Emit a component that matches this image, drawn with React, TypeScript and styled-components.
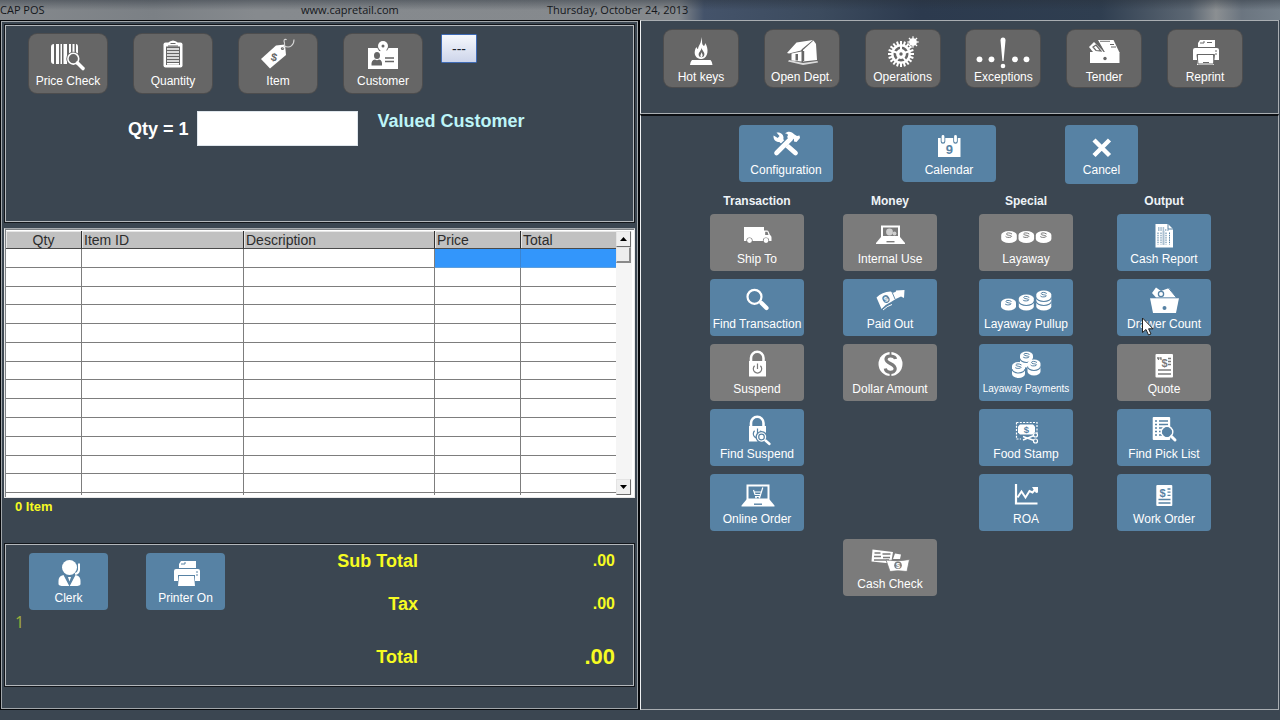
import React from 'react';
import styled, { createGlobalStyle, css } from 'styled-components';

const SLATE = '#3b4651';
const CHARCOAL = '#666666';
const GREY = '#7b7b7b';
const BLUE = '#5782a4';
const YELLOW = '#f6fb22';

const GlobalStyle = createGlobalStyle`
  *, *::before, *::after { box-sizing: border-box; }
  body {
    margin: 0;
    background: ${SLATE};
    font-family: "Liberation Sans", Arial, sans-serif;
    color: #fff;
  }
  button, input { font: inherit; }
`;

/* ---------- layout ---------- */

const Page = styled.div`
  min-height: 100vh;
  display: flex;
  flex-direction: column;
`;

const TitleBar = styled.header`
  height: 20px;
  display: grid;
  grid-template-columns: 301px 246px 1fr;
  align-items: center;
  font-family: "Open Sans", "Noto Sans", sans-serif;
  font-size: 11px;
  line-height: 20px;
  color: #14171b;
  background:
    linear-gradient(to bottom, rgba(40, 48, 58, 0.45) 0, rgba(60, 66, 74, 0) 10px),
    linear-gradient(
      to right,
      #85898d 0,
      #7b8085 12%,
      #868a8e 20%,
      #85898d 53%,
      #44536a 55%,
      #3c4b5e 64%,
      #2c3a4e 72%,
      #2f3e50 86%,
      #5d6874 93%,
      #8b8f92 95%,
      #6b7580 97%,
      #75808a 100%
    );
`;

const Main = styled.main`
  flex: 1;
  display: grid;
  grid-template-columns: 1fr 1fr;
  padding-bottom: 10px;
`;

const etched = css`
  border: 1px solid #12161b;
  box-shadow: inset 0 0 0 1px #b4b8bc;
`;

const SaleSide = styled.section`
  display: flex;
  flex-direction: column;
  min-width: 0;
  padding: 3px 3px 22px 3px;
  border: 1px solid #05070a;
  border-right-width: 2px;
  box-shadow: inset 0 0 0 1px #a2a7ab;
`;

const EntryPanel = styled.section`
  ${etched}
  min-height: 199px;
  padding: 9px 20px 9px 24px;
`;

const KeyRow = styled.div`
  display: flex;
  align-items: flex-start;
  gap: 27px;
`;

const EntryRow = styled.div`
  display: flex;
  align-items: flex-start;
  margin-top: 18px;
  padding-left: 99px;
`;

const QtyLabel = styled.label`
  margin-right: 8px;
  font-size: 18px;
  font-weight: 700;
  line-height: 36px;
`;

const QtyInput = styled.input`
  width: 161px;
  height: 35px;
  margin-right: 20px;
  padding: 0 8px;
  border: 1px solid #dfe6ec;
  border-radius: 0;
  background: #fff;
  color: #111;
  font-size: 18px;
`;

const CustomerName = styled.p`
  margin: 0;
  font-size: 18px;
  font-weight: 700;
  line-height: 20px;
  color: #bdf5f8;
`;

const MoreButton = styled.button`
  width: 36px;
  height: 29px;
  margin-left: -8px;
  padding: 0;
  border: 1px solid #3f6bb5;
  border-radius: 1px;
  background: linear-gradient(#f6f8fd, #cdd5ea);
  color: #1d2430;
  font-size: 14px;
  line-height: 28px;
`;

/* ---------- item table ---------- */

const TableFrame = styled.div`
  flex: 1 1 200px;
  min-height: 0;
  display: flex;
  margin-top: 5px;
  padding: 2px 2px 2px 1px;
  border: 1px solid #e8e8e8;
  border-top-color: #a8acb0;
  background: #fff;
  box-shadow: inset 1px 1px 0 #7f8387;
  overflow: hidden;
`;

const TableClip = styled.div`
  flex: 1;
  height: 264px;
  overflow: hidden;
`;

const ItemTable = styled.table`
  width: 100%;
  height: 281px;
  table-layout: fixed;
  border-collapse: separate;
  border-spacing: 0;
  color: #2c2c2c;
  font-size: 14px;
  line-height: 16px;
`;

const HeadCell = styled.th<{ $width?: number; $center?: boolean }>`
  width: ${p => (p.$width ? `${p.$width}px` : 'auto')};
  height: 18px;
  padding: 0 2px;
  background: #c1c1c1;
  border-right: 1px solid #2f2f2f;
  border-bottom: 1px solid #4a4a4a;
  box-shadow: inset 1px 1px 0 #e6e6e6;
  font-weight: 400;
  text-align: ${p => (p.$center ? 'center' : 'left')};
  &:last-child { border-right: 0; }
`;

const Cell = styled.td<{ $selected?: boolean }>`
  padding: 0;
  background: ${p => (p.$selected ? '#3396fb' : '#fff')};
  border-right: 1px solid ${p => (p.$selected ? '#3a84d2' : '#7d7d7d')};
  border-bottom: 1px solid ${p => (p.$selected ? '#5f9fdc' : '#7d7d7d')};
  &:last-child { border-right: 0; }
`;

const ScrollTrack = styled.div`
  width: 16px;
  display: flex;
  flex-direction: column;
  justify-content: space-between;
  background: #f5f5f5;
`;

const ScrollButton = styled.button`
  display: flex;
  align-items: center;
  justify-content: center;
  width: 15px;
  height: 16px;
  padding: 0;
  border: 1px solid #e4e4e4;
  border-right-color: #6c6c6c;
  border-bottom-color: #6c6c6c;
  background: #efefef;
`;

const ScrollThumb = styled.div`
  width: 15px;
  height: 16px;
  border: 1px solid #e4e4e4;
  border-right: 2px solid #8a8a8a;
  border-bottom: 2px solid #8a8a8a;
  background: #ededed;
`;

const ItemCount = styled.p`
  height: 45px;
  margin: 0;
  padding-left: 11px;
  font-size: 13px;
  font-weight: 700;
  line-height: 18px;
  color: ${YELLOW};
`;

/* ---------- totals ---------- */

const TotalsPanel = styled.section`
  ${etched}
  display: flex;
  justify-content: space-between;
  min-height: 144px;
  padding: 1px 19px 1px 10px;
`;

const ClerkArea = styled.div`
  padding-top: 8px;
`;

const ClerkKeys = styled.div`
  display: flex;
  gap: 38px;
  padding-left: 14px;
`;

const ClerkNumber = styled.p`
  margin: 2px 0 0;
  font-family: "Noto Sans", "Open Sans", sans-serif;
  font-size: 16px;
  line-height: 20px;
  color: #9aac3c;
`;

const Totals = styled.dl`
  display: grid;
  grid-template-columns: auto 197px;
  grid-template-rows: 32px 54px 52px;
  align-items: center;
  margin: 0;
  color: ${YELLOW};
  font-weight: 700;
  text-align: right;
`;

const TotalLabel = styled.dt`
  font-size: 18px;
  line-height: 24px;
`;

const TotalValue = styled.dd<{ $large?: boolean }>`
  margin: 0;
  font-size: ${p => (p.$large ? 22 : 16)}px;
  line-height: 24px;
`;

/* ---------- function side ---------- */

const FunctionSide = styled.section`
  display: flex;
  flex-direction: column;
  min-width: 0;
  margin-right: 1px;
`;

const CategoryBar = styled.nav`
  display: flex;
  justify-content: space-between;
  height: 94px;
  padding: 9px 36px 0 23px;
  border: 1px solid #a9aeb2;
  border-left-color: #f0f2f4;
`;

const FunctionPanel = styled.div`
  flex: 1;
  padding: 9px 67px 16px 69px;
  border: 1px solid #a9aeb2;
  border-left-color: #f0f2f4;
  border-top: 2px solid #0c0f13;
`;

const CommandRow = styled.div`
  display: flex;
  align-items: flex-start;
  justify-content: space-between;
  padding: 0 73px 0 29px;
`;

const Columns = styled.div`
  display: grid;
  grid-template-columns: 133fr 136fr 138fr 94px;
  margin-top: 9px;
`;

const Column = styled.section`
  width: 94px;
`;

const ColumnTitle = styled.h2`
  margin: 0 0 5px;
  font-size: 12px;
  font-weight: 700;
  line-height: 16px;
  text-align: center;
  color: #eef3f7;
`;

const KeyStack = styled.div`
  display: grid;
  grid-auto-rows: 57px;
  gap: 8px;
`;

/* ---------- keys ---------- */

type Tone = 'charcoal' | 'grey' | 'blue';
const tones: Record<Tone, string> = { charcoal: CHARCOAL, grey: GREY, blue: BLUE };

const Key = styled.button<{ $tone: Tone; $w: number; $h: number; $row?: number }>`
  --face: ${p => tones[p.$tone]};
  position: relative;
  display: flex;
  flex-direction: column;
  align-items: center;
  width: ${p => p.$w}px;
  height: ${p => p.$h}px;
  padding: ${p => (p.$tone === 'charcoal' ? 3 : 1)}px 0 0;
  border: 0;
  border-radius: ${p => (p.$tone === 'charcoal' ? 8 : 4)}px;
  background: var(--face);
  box-shadow: ${p => (p.$tone === 'charcoal' ? '0 0 0 1px #4d4d4e' : 'none')};
  color: #fff;
  ${p => p.$row && css`grid-row: ${p.$row};`}
`;

const KeyIcon = styled.svg`
  flex: none;
  width: 60px;
  height: 36px;
  fill: #fff;
`;

const KeyText = styled.span<{ $small?: boolean }>`
  font-size: ${p => (p.$small ? 10 : 12)}px;
  line-height: 16px;
  white-space: nowrap;
`;

const Pointer = styled.svg`
  position: absolute;
  left: 24px;
  top: 38px;
  width: 14px;
  height: 20px;
`;

/* ---------- icons, drawn on a 60 x 36 field ---------- */

const F = 'var(--face)';

const Dollar = ({ x, y, size, fill = F }: { x: number; y: number; size: number; fill?: string }) => (
  <text x={x} y={y} fontSize={size} fontWeight={700} textAnchor="middle" fill={fill}>$</text>
);

/** One coin pile: a top disc and `n` edge bands below it. */
const Coins = ({ cx, top, n, rx = 8 }: { cx: number; top: number; n: number; rx?: number }) => (
  <g>
    <path
      d={`M${cx - rx} ${top + 4} A${rx} 4 0 0 1 ${cx + rx} ${top + 4} V${top + 4 + n * 4} A${rx} 4 0 0 1 ${cx - rx} ${top + 4 + n * 4} Z`}
    />
    {n > 1 && Array.from({ length: n - 1 }, (_, i) => (
      <path
        key={i}
        d={`M${cx - rx} ${top + 7 + i * 4} A${rx} 4 0 0 0 ${cx + rx} ${top + 7 + i * 4}`}
        fill="none" stroke={F} strokeWidth={1.1}
      />
    ))}
    <path
      d={`M${cx + 3} ${top + 3} C${cx} ${top + 1} ${cx - 4} ${top + 2} ${cx - 2} ${top + 3.8} C${cx} ${top + 4.6} ${cx + 4} ${top + 4.4} ${cx + 2} ${top + 6} C${cx} ${top + 6.8} ${cx - 3} ${top + 6.4} ${cx - 3.4} ${top + 5.4}`}
      fill="none" stroke={F} strokeWidth={1}
    />
  </g>
);

const Laptop = ({ l, r, t, b }: { l: number; r: number; t: number; b: number }) => (
  <g>
    <path d={`M${l} ${t} H${r} V${b} H${l} Z`} fill="none" stroke="#fff" strokeWidth={2} />
    <path d={`M${l - 1} ${b} H${r + 1} L${r + 6} ${b + 6} V${b + 7} H${l - 6} V${b + 6} Z`} />
    <path d={`M${(l + r) / 2 - 4} ${b + 4} h8 v1.4 h-8 Z`} fill={F} />
  </g>
);

const Printer = () => (
  <g>
    <path d="M25 7 H40 V14 H23 V10 Z" />
    <path d="M25 10 h4 v-2" fill="none" stroke={F} strokeWidth={1} />
    <path d="M20 15 H42 Q44 15 44 17 V27 H39 V21 H22 V27 H18 V17 Q18 15 20 15 Z" />
    <path d="M23 22 H38 L39 32 H22 Z" />
    <path d="M40 18 h2 M40 21 h2" stroke={F} strokeWidth={1} />
  </g>
);

const Padlock = () => (
  <g>
    <path d="M24 17 V13 A6 6 0 0 1 36.500 13 V17" fill="none" stroke="#fff" strokeWidth={2.6} />
    <path d="M22 16 H39 V31.500 H22 Z" />
    <path d="M27.600 20.800 A4.200 4.200 0 1 0 33.400 20.800 M30.500 18.500 V24" fill="none" stroke={F} strokeWidth={1.2} />
  </g>
);

const Gear = ({ cx, cy, r, teeth, depth }: { cx: number; cy: number; r: number; teeth: number; depth: number }) => (
  <g transform={`translate(${cx} ${cy})`}>
    {Array.from({ length: teeth }, (_, i) => (
      <rect key={i} x={-depth / 3} y={-r - depth} width={depth / 1.5} height={depth + 1} transform={`rotate(${(360 / teeth) * i})`} />
    ))}
    <circle r={r} />
  </g>
);

const icons = {
  priceCheck: (
    <g>
      <path d="M16 7 Q13 7 13 10 V24 Q13 27 16 27 Z M18 7 h3 v20 h-3 Z M22.500 7 h1.500 v20 h-1.500 Z M25.500 7 h3.500 v20 h-3.500 Z M31 7 h2 v9 h-2 Z M34.500 7 h2 v9 h-2 Z M38 7 Q40 7 40 10 V17 h-2 Z" />
      <circle cx={35.300} cy={21.700} r={7} fill={F} />
      <circle cx={35.300} cy={21.700} r={5.400} fill={F} stroke="#fff" strokeWidth={1.600} />
      <path d="M39.500 26 L45 31.500" stroke="#fff" strokeWidth={3.600} strokeLinecap="round" />
    </g>
  ),
  quantity: (
    <g>
      <rect x={20.500} y={5.500} width={19} height={25} rx={2} />
      <rect x={23} y={9.500} width={14} height={18.500} fill={F} />
      <path d="M24 12 h12 M24 15 h12 M24 18 h12 M24 21 h12 M24 24 h12 M24 26.800 h12" stroke="#fff" strokeWidth={1.700} />
      <path d="M25 9 V6.500 Q26 4 30 3.500 Q34 4 35 6.500 V9 Z" />
      <path d="M25 9 h10 M27.500 6.500 h5" stroke={F} strokeWidth={1.100} />
    </g>
  ),
  item: (
    <g>
      <path d="M13 22 L28 8.500 L37 7.500 L38 18 L22 31.500 Z" />
      <circle cx={34.500} cy={11.500} r={1.600} fill={F} />
      <g transform="rotate(12 26 20)"><Dollar x={26} y={24} size={11} /></g>
      <path d="M34.500 11.500 C37 10 37 7 36 4 C36 2 38 2 38.500 3 M36.500 9 C42 12 46 8 46 2.500" fill="none" stroke="#d6d6d6" strokeWidth={1.100} />
    </g>
  ),
  customer: (
    <g>
      <rect x={15} y={11} width={30} height={21} />
      <circle cx={30} cy={9} r={6} fill={F} />
      <circle cx={30} cy={9} r={5} />
      <path d="M28 11 h5 l1 4 h-7 Z" />
      <circle cx={30} cy={9} r={1.500} fill={F} />
      <ellipse cx={24} cy={18.500} rx={3} ry={3.600} fill={F} />
      <path d="M18.500 28.500 Q18 23 22 22.500 Q24 24 26 22.500 Q29.500 23 29 28.500 Z" fill={F} />
      <path d="M32 21 h9 M32 24.500 h9" stroke={F} strokeWidth={1.500} />
    </g>
  ),
  hotKeys: (
    <g>
      <path d="M30 4 C32 9 30 11 33 13 C34 12 34 11 34 10 C38 15 37.500 25 31 26 H29 C23 25 22.500 18 25.500 14 C26 15.500 26.500 16 27 16 C27.500 12 31 10 30 4 Z" />
      <path d="M30.500 14.500 C31 18 34 19 33.300 22 C32.800 25 28 25 27.700 22 C27.400 19 30.500 18 30.500 14.500 Z" fill={F} />
      <path d="M30.500 19 C31 21 32.500 22 31 24 H30 C28.500 22.500 30.500 21 30.500 19 Z" />
      <path d="M21 27 H39.500 Q41.500 29 41.500 32 H19 Q19 29 21 27 Z" />
    </g>
  ),
  openDept: (
    <g>
      <path d="M15 20 L24.500 9.500 L41 7 L30 16 L29 17.500 L17 20.500 Z" />
      <path d="M41.500 7.500 L44 11 L45 27 L31 28.500 V17 Z" />
      <path d="M19.500 20.500 L29.500 18.500 V28.500 L19.500 27.500 Z" />
      <path d="M23.500 21 h2.500 v6.500 h-2.500 Z M31 18 h1.200 v10 h-1.200 Z" fill={F} />
      <path d="M17 27 L31 30 L45.500 28 L46 29.500 L31 32 L16 28.500 Z" fill="#dcdcdc" />
    </g>
  ),
  operations: (
    <g>
      <Gear cx={28} cy={21} r={10} teeth={20} depth={3} />
      <circle cx={28} cy={21} r={6.200} fill="none" stroke={F} strokeWidth={2.600} />
      <path d="M28 21 V13 M28 21 L20.500 18.500 M28 21 L23.500 27.500 M28 21 L32.500 27.500 M28 21 L35.500 18.500" stroke="#fff" strokeWidth={2} />
      <circle cx={28} cy={21} r={1.700} fill={F} />
      <Gear cx={40} cy={9} r={3.800} teeth={8} depth={1.900} />
    </g>
  ),
  exceptions: (
    <g>
      <circle cx={6.500} cy={26.300} r={2.900} />
      <circle cx={18.500} cy={26.300} r={2.900} />
      <circle cx={42} cy={26.300} r={2.900} />
      <circle cx={53.500} cy={26.300} r={2.900} />
      <path d="M27.500 7.500 Q27.500 4.500 30 4.500 Q32.500 4.500 32.500 7.500 L30.600 28 H29.400 Z" />
      <circle cx={30} cy={33} r={2.300} />
    </g>
  ),
  tender: (
    <g>
      <path d="M16 19 H45.500 V30 H16 Z" />
      <path d="M24 7 H39.500 L45.500 19.500 H31 Z" />
      <path d="M26 8.300 h10" stroke={F} strokeWidth={0.900} />
      <path d="M36 11.500 h4 M37 14 h5" stroke={F} strokeWidth={1} />
      <path d="M15 14 L20 9 L30 19 H19 Z" />
      <path d="M19 14 L22 12 L27 18 L22 17.500 Z" fill="none" stroke={F} strokeWidth={1.200} />
      <path d="M30 19 l-6.500 -11" fill="none" stroke={F} strokeWidth={0.800} />
      <circle cx={31} cy={25.500} r={1.700} fill={F} />
    </g>
  ),
  reprint: (
    <g>
      <Printer />
      <path d="M22 21.500 H39.500 L38.500 31 H23 Z" fill="none" stroke={F} strokeWidth={1} />
      <path d="M28 29.500 h6 M32 9.500 h5" stroke={F} strokeWidth={1} />
    </g>
  ),
  configuration: (
    <g>
      <path d="M24 13.500 L39.500 27" stroke="#fff" strokeWidth={4.800} strokeLinecap="round" />
      <path d="M20.500 6.500 L23.500 10 L21.800 12 L17.600 9.400 C16.800 13.500 20.500 17 25 15.800 L27.500 12.500 C28 8.500 24.500 5.800 20.500 6.500 Z" />
      <path d="M20 26.500 L35.500 11" stroke={F} strokeWidth={6} />
      <path d="M20.500 27 L35 12.500" stroke="#fff" strokeWidth={4.600} strokeLinecap="round" />
      <path d="M29 7.500 C32 4.500 36 5.500 38.500 8.500 L41 10 L43.500 9.500 L44 12 L40.500 16 L38 15.500 V13.500 L36.500 12 L34 14 L31 11 C33 9 31.500 7.500 29 7.500 Z" />
    </g>
  ),
  calendar: (
    <g>
      <path d="M19 12 H41.500 V31 H19 Z" />
      <path d="M24 10 v5.500 M36.500 10 v5.500" stroke={F} strokeWidth={4.600} strokeLinecap="round" />
      <path d="M24 10.500 v4.500 M36.500 10.500 v4.500" stroke="#fff" strokeWidth={2.800} strokeLinecap="round" />
      <text x={30.300} y={27.500} fontSize={13} fontWeight={700} textAnchor="middle" fill={F}>9</text>
    </g>
  ),
  cancel: <path d="M22 14 L37.500 29.500 M37.500 14 L22 29.500" stroke="#fff" strokeWidth={4.400} />,
  clerk: (
    <g>
      <circle cx={30.500} cy={13.500} r={7.500} />
      <path d="M40 9.500 V16 Q39.500 19.500 36 20" fill="none" stroke="#fff" strokeWidth={2} />
      <path d="M23 21.500 L25 21 L30.500 31 L36 21 L38 21.500 Q41.500 22.500 41.500 27 V30 Q41.500 32 36 32 H25 Q19.500 32 19.500 30 V27 Q19.500 22.500 23 21.500 Z" />
      <path d="M25 20.500 L30.500 31 L36 20.500" fill="none" stroke={F} strokeWidth={1.400} />
      <path d="M29 23 h3 l-1.500 4.500 Z" />
    </g>
  ),
  printer: <Printer />,
  truck: (
    <g>
      <path d="M17 12 H37 V26 H17 Z" />
      <path d="M37 15.500 H40 Q41 15.500 41.500 16.500 L43 20 Q44.500 20.500 44.500 22.500 V26 H37 Z" />
      <path d="M38.200 16.800 H40.500 L41.500 20 H38.200 Z" fill={F} />
      <circle cx={22.500} cy={25.500} r={3.100} fill={F} />
      <circle cx={22.500} cy={25.500} r={2.400} />
      <circle cx={39} cy={25.500} r={3.100} fill={F} />
      <circle cx={39} cy={25.500} r={2.400} />
    </g>
  ),
  internalUse: (
    <g>
      <Laptop l={22} r={39} t={11.500} b={22} />
      <circle cx={29.500} cy={17} r={3.400} fill="#d0d0d0" />
      <circle cx={34.500} cy={18.500} r={1.900} fill="#d0d0d0" />
    </g>
  ),
  findTransaction: (
    <g>
      <circle cx={27.500} cy={16.800} r={7} fill="none" stroke="#fff" strokeWidth={2.200} />
      <path d="M34.500 23 L39.500 28" stroke="#fff" strokeWidth={4.200} strokeLinecap="round" />
    </g>
  ),
  paidOut: (
    <g>
      <path d="M16.500 17.500 Q22 12 30.500 11.500 Q33 13 34 12.500 L36 11.500 V10.500 L44.500 10 L44 18 L41 16.500 Q37 18 31 22 Q26 24 21.500 29 Z" />
      <path d="M32 12 L35 19 M22 29.500 Q27 24.500 32 23" fill="none" stroke={F} strokeWidth={0.900} />
      <path d="M23 30 Q27 26 32 24.500" fill="none" stroke="#fff" strokeWidth={1} />
      <ellipse cx={26} cy={19} rx={3.400} ry={4} fill={F} transform="rotate(-30 26 19)" />
      <g transform="rotate(-30 26 19)"><Dollar x={26} y={21.500} size={7} fill="#fff" /></g>
    </g>
  ),
  suspend: <Padlock />,
  dollarAmount: (
    <g>
      <circle cx={30.500} cy={19} r={12} />
      <path
        d="M35.500 14 C35 10.500 26.500 9.500 26 14 C25.500 18.500 35.500 18.500 35.200 24 C35 28.500 26 28.500 25.300 23.500"
        fill="none" stroke={F} strokeWidth={3.200}
      />
      <path d="M30.500 6.500 v5 M30.500 26.500 v5" stroke={F} strokeWidth={1.800} />
    </g>
  ),
  layaway: (
    <g>
      {[13, 30.300, 47.600].map(x => (
        <Coins key={x} cx={x} top={16} n={1} rx={7.800} />
      ))}
    </g>
  ),
  layawayPullup: (
    <g>
      <Coins cx={12.500} top={18.500} n={1} rx={7.500} />
      <Coins cx={30.300} top={14.500} n={2} rx={7.500} />
      <Coins cx={47.800} top={10.500} n={3} rx={7.500} />
    </g>
  ),
  layawayPayments: (
    <g>
      <Coins cx={30.500} top={6.500} n={2} rx={6.500} />
      <Coins cx={38} top={14.500} n={2} rx={6.500} />
      <Coins cx={22.500} top={17} n={2} rx={6.500} />
    </g>
  ),
  cashReport: (
    <g>
      <path d="M21.500 9 H34 L39 14 V32.500 H21.500 Z" />
      <path d="M34 9 v5 h5" fill="none" stroke={F} strokeWidth={1} />
      <path d="M24 13 h7 M24 15 h11 M24 17.500 v12 M27 17.500 v12 M32 17.500 v12 M35.500 17.500 v12" stroke={F} strokeWidth={1} strokeDasharray="1.500 0.800" />
      <path d="M28.500 16 h2 v14 h-2 Z" fill={F} opacity={0.500} />
    </g>
  ),
  drawerCount: (
    <g>
      <path d="M18 13 L22 7.500 L27 11 L35 8 L42 17.500 H22 Z" />
      <path d="M28 9 L34 7.500 L42 17" fill="none" stroke={F} strokeWidth={1} />
      <circle cx={27} cy={14} r={2.600} fill="none" stroke={F} strokeWidth={1.300} />
      <path d="M16 18 H45 L42 33 H19 Z" />
      <path d="M16 18 h29" stroke={F} strokeWidth={0.600} />
      <circle cx={30.500} cy={28} r={2} fill={F} />
    </g>
  ),
  quote: (
    <g>
      <rect x={21.500} y={9} width={17.500} height={23.500} rx={1} />
      <path d="M23 13 h1.500 v2 M25.500 13 h1.500 v2 M34 13.500 h3 M34 16.500 h3 M34 19.500 h3" fill="none" stroke={F} strokeWidth={1.300} />
      <Dollar x={30.500} y={22} size={11} />
      <path d="M24 25 h13 M24 29 h13" stroke={F} strokeWidth={1.500} />
    </g>
  ),
  findSuspend: (
    <g>
      <Padlock />
      <circle cx={34.500} cy={27} r={6} fill={F} />
      <circle cx={34.500} cy={27} r={4.700} fill="#fff" />
      <circle cx={34.500} cy={27} r={2.800} fill="none" stroke={F} strokeWidth={1.200} />
      <path d="M38.500 30.500 L42.500 34" stroke="#fff" strokeWidth={2.400} strokeLinecap="round" />
    </g>
  ),
  onlineOrder: (
    <g>
      <Laptop l={20.500} r={41.500} t={10.500} b={24.500} />
      <path d="M26.500 15 L28 19.500 H33.500 M27 17 H34 M35.800 12.500 L33 21.500 H28" fill="none" stroke="#fff" strokeWidth={1.200} />
      <circle cx={29} cy={22.600} r={0.900} />
      <circle cx={32.500} cy={22.600} r={0.900} />
    </g>
  ),
  cashCheck: (
    <g>
      <path d="M12.500 9.500 L33 12 L31 23.500 L11.500 21.500 Z" />
      <path d="M14.500 13 h6 M22.500 14 h8 M14 16.500 h7 M23 17.500 h7 M14 20 h15" stroke={F} strokeWidth={1.500} />
      <path d="M35 13.500 L41 14.500 L40 19 H33 Z" />
      <path d="M26 20 Q38 22 49.500 19.500 L47 31.500 Q37 30 30 31.500 Z" stroke={F} strokeWidth={0.800} />
      <circle cx={38} cy={25.300} r={3.800} fill={F} />
      <Dollar x={38} y={28} size={7.500} fill="#fff" />
    </g>
  ),
  foodStamp: (
    <g>
      <path d="M20.500 12.500 H41 V24 M20.500 12.500 V29 H25" fill="none" stroke="#fff" strokeWidth={1.200} strokeDasharray="2 1.300" />
      <path d="M24 14.500 H37 L39 16.500 V22 L37 24.500 H24 L22 22.500 V16.500 Z" />
      <Dollar x={30.300} y={23} size={9.500} />
      <path d="M27 26.500 L38 30.500 M27 30 L38 25.500" stroke="#fff" strokeWidth={1.400} />
      <circle cx={39.500} cy={25} r={2} fill="none" stroke="#fff" strokeWidth={1.200} />
      <circle cx={39.500} cy={31} r={2} fill="none" stroke="#fff" strokeWidth={1.200} />
    </g>
  ),
  roa: (
    <g>
      <path d="M20 9 V28.500 H41.500" fill="none" stroke="#fff" strokeWidth={2.200} />
      <path d="M21.500 22.500 L25.500 16.500 L29.500 22.500 L33.500 16 L36.500 17.500 L40 13.500" fill="none" stroke="#fff" strokeWidth={2} />
      <path d="M36 12 H42 V17.500 L40 18 Z" />
    </g>
  ),
  findPickList: (
    <g>
      <rect x={18.700} y={7} width={17.500} height={23} rx={1} />
      <path d="M25 11 h9 M25 14.500 h9 M25 18 h4 M25 21.500 h3 M25 25 h3" stroke={F} strokeWidth={1.300} />
      <path d="M21 11 h2 M21 14.500 h2 M21 18 h2 M21 21.500 h2 M21 25 h2" stroke={F} strokeWidth={1.300} />
      <circle cx={33} cy={22} r={6} />
      <circle cx={33} cy={22} r={4.700} fill={F} stroke={F} strokeWidth={1} />
      <circle cx={33} cy={22} r={5.900} fill="none" stroke="#fff" strokeWidth={1.200} />
      <path d="M37.500 26.500 L41 30" stroke="#fff" strokeWidth={3} strokeLinecap="round" />
    </g>
  ),
  workOrder: (
    <g>
      <rect x={22.300} y={10} width={16} height={21} rx={1} />
      <Dollar x={28.500} y={21.500} size={11} />
      <path d="M33.500 14 h3 M33.500 17.200 h3 M33.500 20.400 h3 M24.500 24.500 h12 M24.500 28 h12" stroke={F} strokeWidth={1.300} />
    </g>
  ),
};

type IconName = keyof typeof icons;

interface KeySpec {
  label: string;
  icon: IconName;
  tone: Tone;
  w?: number;
  h?: number;
  row?: number;
  small?: boolean;
  pointer?: boolean;
}

const KeyButton = ({ label, icon, tone, w = 94, h = 57, row, small, pointer }: KeySpec) => (
  <Key type="button" $tone={tone} $w={w} $h={h} $row={row}>
    <KeyIcon viewBox="0 0 60 36" aria-hidden="true">{icons[icon]}</KeyIcon>
    <KeyText $small={small}>{label}</KeyText>
    {pointer && (
      <Pointer viewBox="0 0 14 20" aria-hidden="true">
        <path d="M1.500 1 V15.500 L5 12.500 L7.500 18 L10 17 L7.600 11.800 H12 Z" fill="#fff" stroke="#222" strokeWidth={1} />
      </Pointer>
    )}
  </Key>
);

/* ---------- content ---------- */

const entryKeys: KeySpec[] = [
  { label: 'Price Check', icon: 'priceCheck', tone: 'charcoal' },
  { label: 'Quantity', icon: 'quantity', tone: 'charcoal' },
  { label: 'Item', icon: 'item', tone: 'charcoal' },
  { label: 'Customer', icon: 'customer', tone: 'charcoal' },
];

const categories: KeySpec[] = [
  { label: 'Hot keys', icon: 'hotKeys', tone: 'charcoal' },
  { label: 'Open Dept.', icon: 'openDept', tone: 'charcoal' },
  { label: 'Operations', icon: 'operations', tone: 'charcoal' },
  { label: 'Exceptions', icon: 'exceptions', tone: 'charcoal' },
  { label: 'Tender', icon: 'tender', tone: 'charcoal' },
  { label: 'Reprint', icon: 'reprint', tone: 'charcoal' },
];

const columns: { title: string; keys: KeySpec[] }[] = [
  {
    title: 'Transaction',
    keys: [
      { label: 'Ship To', icon: 'truck', tone: 'grey' },
      { label: 'Find Transaction', icon: 'findTransaction', tone: 'blue' },
      { label: 'Suspend', icon: 'suspend', tone: 'grey' },
      { label: 'Find Suspend', icon: 'findSuspend', tone: 'blue' },
      { label: 'Online Order', icon: 'onlineOrder', tone: 'blue' },
    ],
  },
  {
    title: 'Money',
    keys: [
      { label: 'Internal Use', icon: 'internalUse', tone: 'grey' },
      { label: 'Paid Out', icon: 'paidOut', tone: 'blue' },
      { label: 'Dollar Amount', icon: 'dollarAmount', tone: 'grey' },
      { label: 'Cash Check', icon: 'cashCheck', tone: 'grey', row: 6 },
    ],
  },
  {
    title: 'Special',
    keys: [
      { label: 'Layaway', icon: 'layaway', tone: 'grey' },
      { label: 'Layaway Pullup', icon: 'layawayPullup', tone: 'blue' },
      { label: 'Layaway Payments', icon: 'layawayPayments', tone: 'blue', small: true },
      { label: 'Food Stamp', icon: 'foodStamp', tone: 'blue' },
      { label: 'ROA', icon: 'roa', tone: 'blue' },
    ],
  },
  {
    title: 'Output',
    keys: [
      { label: 'Cash Report', icon: 'cashReport', tone: 'blue' },
      { label: 'Drawer Count', icon: 'drawerCount', tone: 'blue', pointer: true },
      { label: 'Quote', icon: 'quote', tone: 'grey' },
      { label: 'Find Pick List', icon: 'findPickList', tone: 'blue' },
      { label: 'Work Order', icon: 'workOrder', tone: 'blue' },
    ],
  },
];

const totals = [
  { label: 'Sub Total', value: '.00' },
  { label: 'Tax', value: '.00' },
  { label: 'Total', value: '.00', large: true },
];

const BLANK_ROWS = 14;

export default function App() {
  return (
    <Page>
      <GlobalStyle />
      <TitleBar>
        <span>CAP POS</span>
        <span>www.capretail.com</span>
        <span>Thursday, October 24, 2013</span>
      </TitleBar>
      <Main>
        <SaleSide>
          <EntryPanel>
            <KeyRow>
              {entryKeys.map(k => <KeyButton key={k.label} {...k} w={78} h={59} />)}
              <MoreButton type="button">---</MoreButton>
            </KeyRow>
            <EntryRow>
              <QtyLabel htmlFor="entry">Qty = 1</QtyLabel>
              <QtyInput id="entry" type="text" />
              <CustomerName>Valued Customer</CustomerName>
            </EntryRow>
          </EntryPanel>

          <TableFrame>
            <TableClip>
              <ItemTable>
                <thead>
                  <tr>
                    <HeadCell $width={76} $center>Qty</HeadCell>
                    <HeadCell $width={162}>Item ID</HeadCell>
                    <HeadCell>Description</HeadCell>
                    <HeadCell $width={86}>Price</HeadCell>
                    <HeadCell $width={95}>Total</HeadCell>
                  </tr>
                </thead>
                <tbody>
                  {Array.from({ length: BLANK_ROWS }, (_, r) => (
                    <tr key={r}>
                      <Cell /><Cell /><Cell />
                      <Cell $selected={r === 0} />
                      <Cell $selected={r === 0} />
                    </tr>
                  ))}
                </tbody>
              </ItemTable>
            </TableClip>
            <ScrollTrack>
              <div>
                <ScrollButton type="button" aria-label="Scroll up">
                  <svg width="7" height="4" aria-hidden="true"><path d="M0 4 L3.500 0 L7 4 Z" /></svg>
                </ScrollButton>
                <ScrollThumb />
              </div>
              <ScrollButton type="button" aria-label="Scroll down">
                <svg width="7" height="4" aria-hidden="true"><path d="M0 0 L3.500 4 L7 0 Z" /></svg>
              </ScrollButton>
            </ScrollTrack>
          </TableFrame>

          <ItemCount>0 Item</ItemCount>

          <TotalsPanel>
            <ClerkArea>
              <ClerkKeys>
                <KeyButton label="Clerk" icon="clerk" tone="blue" w={79} />
                <KeyButton label="Printer On" icon="printer" tone="blue" w={79} />
              </ClerkKeys>
              <ClerkNumber>1</ClerkNumber>
            </ClerkArea>
            <Totals>
              {totals.map(t => (
                <React.Fragment key={t.label}>
                  <TotalLabel>{t.label}</TotalLabel>
                  <TotalValue $large={t.large}>{t.value}</TotalValue>
                </React.Fragment>
              ))}
            </Totals>
          </TotalsPanel>
        </SaleSide>

        <FunctionSide>
          <CategoryBar>
            {categories.map(k => <KeyButton key={k.label} {...k} w={74} />)}
          </CategoryBar>
          <FunctionPanel>
            <CommandRow>
              <KeyButton label="Configuration" icon="configuration" tone="blue" />
              <KeyButton label="Calendar" icon="calendar" tone="blue" />
              <KeyButton label="Cancel" icon="cancel" tone="blue" w={73} h={59} />
            </CommandRow>
            <Columns>
              {columns.map(c => (
                <Column key={c.title}>
                  <ColumnTitle>{c.title}</ColumnTitle>
                  <KeyStack>
                    {c.keys.map(k => <KeyButton key={k.label} {...k} />)}
                  </KeyStack>
                </Column>
              ))}
            </Columns>
          </FunctionPanel>
        </FunctionSide>
      </Main>
    </Page>
  );
}
